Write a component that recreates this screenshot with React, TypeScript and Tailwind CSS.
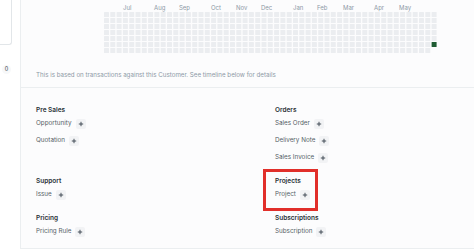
const MONTHS: [string, number][] = [
  ['Jul', 19], ['Aug', 50], ['Sep', 75], ['Oct', 107], ['Nov', 132], ['Dec', 157],
  ['Jan', 189], ['Feb', 213], ['Mar', 239], ['Apr', 270], ['May', 295],
];

const SECTIONS: { title: string; items: string[] }[][] = [
  [{ title: 'Pre Sales', items: ['Opportunity', 'Quotation'] }, { title: 'Orders', items: ['Sales Order', 'Delivery Note', 'Sales Invoice'] }],
  [{ title: 'Support', items: ['Issue'] }, { title: 'Projects', items: ['Project'] }],
  [{ title: 'Pricing', items: ['Pricing Rule'] }, { title: 'Subscriptions', items: ['Subscription'] }],
];

function Heatmap() {
  const cells: JSX.Element[] = [];
  for (let c = 0; c < 53; c++) {
    for (let r = 0; r < 7; r++) {
      if (c === 52 && r === 6) continue;
      const green = c === 52 && r === 5;
      cells.push(
        <rect key={`${c}-${r}`} x={c * 6.3} y={12 + r * 6} width={5} height={5} rx={0.5} fill={green ? '#1f5c33' : '#ebedf0'} />,
      );
    }
  }
  return (
    <svg width={334} height={56} className="block">
      {MONTHS.map(([m, x]) => (
        <text key={m} x={x} y={9.5} fontSize={6} fill="#8d99a6" fontFamily="Inter, sans-serif">{m}</text>
      ))}
      {cells}
    </svg>
  );
}

function PlusButton() {
  return (
    <span className="ml-[4px] flex h-[10px] w-[10px] items-center justify-center rounded-[2px] bg-[#f2f3f5]">
      <svg width="6" height="6" viewBox="0 0 6 6">
        <path d="M3 0.8v4.4M0.8 3h4.4" stroke="#36414c" strokeWidth="0.9" />
      </svg>
    </span>
  );
}

function Section({ title, items }: { title: string; items: string[] }) {
  return (
    <div>
      <div className="mb-[4px] text-[6.5px] font-semibold leading-[8px] text-[#2b3238]">{title}</div>
      <div className="flex flex-col gap-[5px]">
        {items.map((i) => (
          <div key={i} className="flex h-[12px] items-center text-[6.3px] text-[#555e66]">
            {i}
            <PlusButton />
          </div>
        ))}
      </div>
    </div>
  );
}

export default function App() {
  return (
    <div className="relative flex h-[252px] w-[474px] overflow-hidden bg-white font-['Inter',sans-serif]">
      <div className="w-[20px] shrink-0">
        <div className="h-[45px] w-[12px] rounded-br-[3px] border-b border-r border-[#e2e6e9]" />
        <div className="ml-[2px] mt-[20px] flex h-[9px] w-[9px] items-center justify-center rounded-full bg-[#f7f8f9] text-[5.5px] text-[#36414c]">0</div>
      </div>
      <div className="h-[249px] flex-1 border-b border-l border-[#ebeef0] bg-[#fcfcfd]">
        <div className="pl-[83px]">
          <Heatmap />
        </div>
        <div className="mt-[15px] border-b border-[#ebeef0] pb-[8px] pl-[15px] text-[6.2px] leading-[8px] text-[#8d99a6]">
          This is based on transactions against this Customer. See timeline below for details
        </div>
        <div className="flex flex-col gap-[13px] pl-[15px] pt-[18px]">
          {SECTIONS.map((row, i) => (
            <div key={i} className="grid grid-cols-[239px_1fr]">
              {row.map((s) => (
                <Section key={s.title} title={s.title} items={s.items} />
              ))}
            </div>
          ))}
        </div>
      </div>
      <div className="absolute left-[263px] top-[169px] h-[42px] w-[55px] border-[3px] border-[#e12f2a]" />
    </div>
  );
}
